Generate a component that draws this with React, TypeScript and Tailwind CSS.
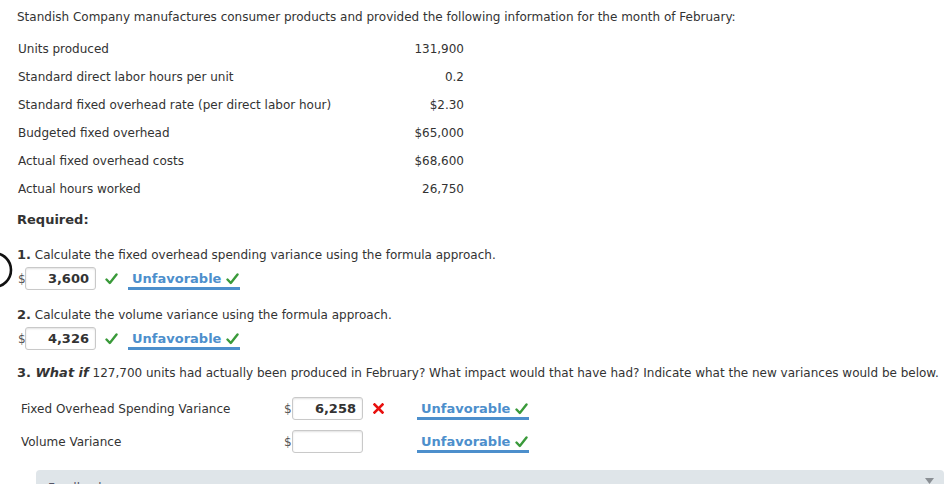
import React from 'react';

const rows: [string, string][] = [
  ['Units produced', '131,900'],
  ['Standard direct labor hours per unit', '0.2'],
  ['Standard fixed overhead rate (per direct labor hour)', '$2.30'],
  ['Budgeted fixed overhead', '$65,000'],
  ['Actual fixed overhead costs', '$68,600'],
  ['Actual hours worked', '26,750'],
];

const Check = () => (
  <svg width="13" height="12" viewBox="0 0 13 12" className="inline-block">
    <path d="M1.5 6.5 L4.8 10 L11.5 1.5" fill="none" stroke="#3a9a3a" strokeWidth="2.4" strokeLinecap="round" strokeLinejoin="round" />
  </svg>
);

const Cross = () => (
  <svg width="11" height="11" viewBox="0 0 11 11">
    <path d="M1.5 1.5 L9.5 9.5 M9.5 1.5 L1.5 9.5" stroke="#e8100e" strokeWidth="2.6" strokeLinecap="square" />
  </svg>
);

const Input = ({ value }: { value?: string }) => (
  <div className="w-[71px] h-[23px] bg-white border border-[#c9c9c9] rounded-[3px] shadow-[inset_0_1px_2px_rgba(0,0,0,0.12)] flex items-center justify-end pr-[6px] text-[13px] font-bold text-[#333]">
    {value}
  </div>
);

const Select = () => (
  <div className="w-[112px] h-[23px] pt-[4px] border-b-[3px] border-[#4d8fcc] flex items-center pl-[4px] gap-[5px]">
    <span className="text-[13px] font-bold text-[#4d8fcc]">Unfavorable</span>
    <Check />
  </div>
);

export default function App() {
  return (
    <div
      className="relative w-[946px] h-[484px] overflow-hidden bg-white text-[#333] text-[12px]"
      style={{ fontFamily: '"DejaVu Sans", Verdana, sans-serif' }}
    >
      <svg className="absolute left-0 top-[248px]" width="14" height="44" viewBox="0 0 14 44">
        <circle cx="-6" cy="22" r="17" fill="none" stroke="#111" strokeWidth="2.6" />
      </svg>

      <div className="pl-[17px] pt-[9px]">
        <p className="h-[16px] leading-[16px]">
          Standish Company manufactures consumer products and provided the following information for the month of February:
        </p>

        <div className="w-[447px] mt-[17px] pl-[1px]">
          {rows.map(([l, v]) => (
            <div key={l} className="flex justify-between h-[28px] items-start leading-[14px]">
              <span>{l}</span>
              <span>{v}</span>
            </div>
          ))}
        </div>

        <p className="font-bold mt-[2px] leading-[16px] text-[13px]">Required:</p>

        <p className="mt-[19px] leading-[16px]">
          <b className="text-[13px]">1.</b> Calculate the fixed overhead spending variance using the formula approach.
        </p>
        <div className="flex items-center mt-[4px] h-[23px]">
          <span className="pl-[1px] w-[8px] text-[#555]">$</span>
          <Input value="3,600" />
          <span className="ml-[9px]"><Check /></span>
          <span className="ml-[10px]"><Select /></span>
        </div>

        <p className="mt-[17px] leading-[16px]">
          <b className="text-[13px]">2.</b> Calculate the volume variance using the formula approach.
        </p>
        <div className="flex items-center mt-[4px] h-[23px]">
          <span className="pl-[1px] w-[8px] text-[#555]">$</span>
          <Input value="4,326" />
          <span className="ml-[9px]"><Check /></span>
          <span className="ml-[10px]"><Select /></span>
        </div>

        <p className="mt-[15px] leading-[16px]">
          <b className="text-[13px]">3. <i>What if</i></b> 127,700 units had actually been produced in February? What impact would that have had? Indicate what the new variances would be below.
        </p>

        <div className="mt-[16px] flex items-center h-[23px]">
          <span className="w-[267px] pl-[4px]">Fixed Overhead Spending Variance</span>
          <span className="w-[8px] text-[#555]">$</span>
          <Input value="6,258" />
          <span className="ml-[10px] w-[44px]"><Cross /></span>
          <Select />
        </div>
        <div className="mt-[10px] flex items-center h-[23px]">
          <span className="w-[267px] pl-[4px]">Volume Variance</span>
          <span className="w-[8px] text-[#555]">$</span>
          <Input />
          <span className="ml-[10px] w-[44px]"></span>
          <Select />
        </div>

        <div className="ml-[19px] mr-[2px] mt-[17px] h-[40px] bg-[#dfe5e9] rounded-t-[4px] relative px-[12px] pt-[9px]">
          <span className="text-[#556]">Feedback</span>
          <svg className="absolute right-[10px] top-[8px]" width="9" height="6" viewBox="0 0 9 6">
            <path d="M0 0 H9 L4.5 6 Z" fill="#8a8f94" />
          </svg>
        </div>
      </div>
    </div>
  );
}
